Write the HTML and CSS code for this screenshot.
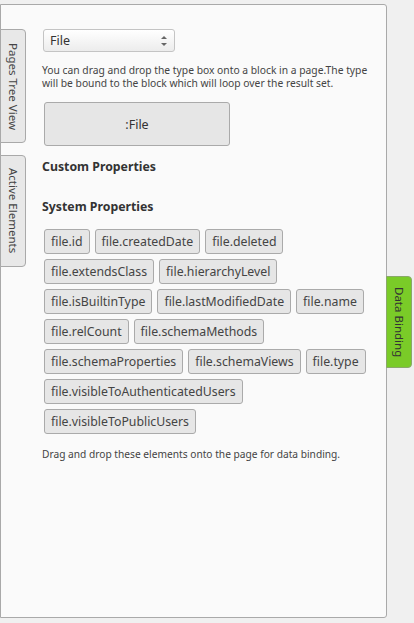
FILE: index.html
```html
<!DOCTYPE html>
<html>
<head>
<meta charset="utf-8">
<link rel="stylesheet" href="styles.css">
</head>
<body>
<div class="panel">
  <div class="left-tabs">
    <div class="vtab vtab-pages"><span>Pages Tree View</span></div>
    <div class="vtab vtab-active"><span>Active Elements</span></div>
  </div>
  <div class="content">
    <div class="select">
      <span class="select-label">File</span>
      <svg class="select-arrows" width="8" height="14" viewBox="0 0 8 14">
        <path d="M1 5 L4 2 L7 5 Z" fill="#666"/>
        <path d="M1 9 L4 12 L7 9 Z" fill="#666"/>
      </svg>
    </div>
    <p class="desc">You can drag and drop the type box onto a block in a page.The type will be bound to the block which will loop over the result set.</p>
    <div class="type-box">:File</div>
    <h3 class="section-title title-custom">Custom Properties</h3>
    <h3 class="section-title title-system">System Properties</h3>
    <div class="tags">
      <span class="tag">file.id</span>
      <span class="tag">file.createdDate</span>
      <span class="tag">file.deleted</span>
      <span class="tag">file.extendsClass</span>
      <span class="tag">file.hierarchyLevel</span>
      <span class="tag">file.isBuiltinType</span>
      <span class="tag">file.lastModifiedDate</span>
      <span class="tag">file.name</span>
      <span class="tag">file.relCount</span>
      <span class="tag">file.schemaMethods</span>
      <span class="tag">file.schemaProperties</span>
      <span class="tag">file.schemaViews</span>
      <span class="tag">file.type</span>
      <span class="tag">file.visibleToAuthenticatedUsers</span>
      <span class="tag">file.visibleToPublicUsers</span>
    </div>
    <p class="hint">Drag and drop these elements onto the page for data binding.</p>
  </div>
</div>
<div class="vtab vtab-binding"><span>Data Binding</span></div>
</body>
</html>
```
FILE: styles.css
```css
html, body {
  margin: 0;
  padding: 0;
}
body {
  background: #f0f0f0;
  font-family: "Noto Sans", "Open Sans", sans-serif;
  color: #333;
  display: flex;
  align-items: flex-start;
  width: 414px;
  height: 623px;
  overflow: hidden;
}
.panel {
  box-sizing: border-box;
  margin-top: 4px;
  width: 387px;
  height: 614px;
  background: #fafafa;
  border: 1px solid #a9a9a9;
  border-radius: 0 3px 3px 0;
  display: flex;
  align-items: flex-start;
}
.left-tabs {
  width: 25px;
  padding-top: 24px;
  display: flex;
  flex-direction: column;
  gap: 12px;
  margin-left: -1px;
}
.vtab {
  box-sizing: border-box;
  width: 26px;
  background: #e8e8e8;
  border: 1px solid #a9a9a9;
  border-radius: 0 4px 4px 0;
  display: flex;
  align-items: center;
  justify-content: center;
}
.vtab span {
  writing-mode: vertical-rl;
  font-size: 11.5px;
  color: #444;
  line-height: 14px;
}
.vtab-pages {
  height: 114px;
}
.vtab-active {
  height: 112px;
}
.vtab-binding {
  margin-top: 276px;
  margin-left: -1px;
  height: 92px;
  background: #7acb28;
  border-color: #8aa86a;
}
.vtab-binding span {
  color: #333;
}
.content {
  flex: 1;
  padding: 24px 13px 0 17px;
}
.select {
  box-sizing: border-box;
  width: 132px;
  height: 23px;
  border: 1px solid #c4c4c4;
  border-radius: 3px;
  background: linear-gradient(#ffffff, #ececec);
  display: flex;
  align-items: center;
  justify-content: space-between;
  padding: 0 6px 0 6px;
  margin-left: 1px;
}
.select-label {
  font-size: 12.5px;
  color: #333;
}
.desc {
  margin: 12px 0 0 0;
  font-size: 10.3px;
  line-height: 13px;
  color: #444;
}
.type-box {
  box-sizing: border-box;
  margin: 12px 0 0 2px;
  width: 186px;
  height: 44px;
  background: #e6e6e6;
  border: 1px solid #aaaaaa;
  border-radius: 3px;
  display: flex;
  align-items: center;
  justify-content: center;
  font-size: 12.5px;
  color: #333;
}
.section-title {
  margin: 0;
  font-size: 12.3px;
  font-weight: bold;
  color: #333;
  line-height: 16px;
}
.title-custom {
  margin-top: 13px;
}
.title-system {
  margin-top: 24px;
}
.tags {
  margin: 14px 0 0 2px;
  display: flex;
  flex-wrap: wrap;
  gap: 5px;
}
.tag {
  box-sizing: border-box;
  height: 25px;
  padding: 0 6px;
  background: #e6e6e6;
  border: 1px solid #aaaaaa;
  border-radius: 3px;
  font-size: 12.3px;
  line-height: 23px;
  color: #444;
}
.hint {
  margin: 14px 0 0 0;
  font-size: 10.2px;
  line-height: 13px;
  color: #444;
}
```
